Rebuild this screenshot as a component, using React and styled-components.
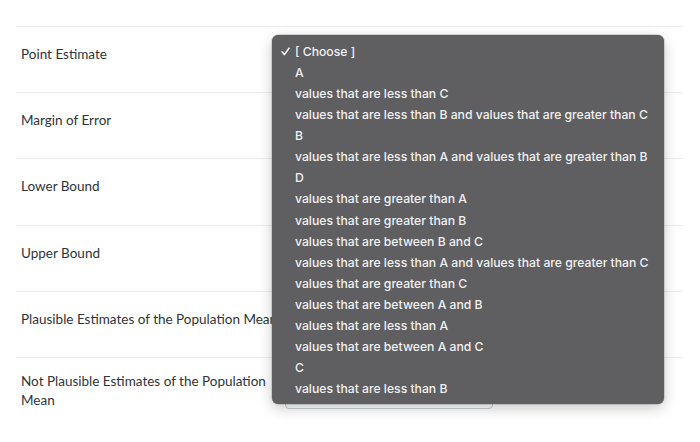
import React from "react";
import styled, { createGlobalStyle } from "styled-components";

const Global = createGlobalStyle`
  html, body { margin: 0; padding: 0; background: #ffffff; }
  body { width: 700px; height: 442px; overflow: hidden; }
`;

const Page = styled.div`
  position: relative;
  width: 700px;
  height: 442px;
  padding: 26px 17px 0 16px;
  box-sizing: border-box;
  font-family: Lato, "Open Sans", sans-serif;
`;

const Table = styled.div`
  display: flex;
  flex-direction: column;
`;

const Row = styled.div`
  display: grid;
  grid-template-columns: 269px 1fr;
  align-items: center;
  height: 66.2px;
  box-sizing: border-box;
  border-top: 1.5px solid #ececec;
  padding-bottom: ${(p) => p.$pb}px;
`;

const Label = styled.div`
  padding-left: 5px;
  font-size: 13.5px;
  line-height: 19px;
  color: #2f3439;
  white-space: ${(p) => (p.$wrap ? "normal" : "nowrap")};
`;

const SelectBox = styled.div`
  width: 208px;
  height: 36px;
  box-sizing: border-box;
  border: 1px solid #c7cdd1;
  border-radius: 4px;
  background: #fff;
`;

const Menu = styled.div`
  position: absolute;
  left: 272px;
  top: 35px;
  width: 392px;
  height: 369px;
  box-sizing: border-box;
  padding: 6px 0 0 0;
  background: #5f5f62;
  border-radius: 6px;
  box-shadow: 0 4px 14px rgba(0, 0, 0, 0.22), 0 0 0 0.5px rgba(0, 0, 0, 0.25);
  font-family: Inter, "Open Sans", sans-serif;
  display: flex;
  flex-direction: column;
`;

const Item = styled.div`
  display: flex;
  align-items: center;
  height: 21.07px;
  padding-left: 9px;
  font-size: 12.2px;
  font-weight: 500;
  color: #f1f1f1;
  white-space: nowrap;
`;

const Check = styled.span`
  width: 14px;
  display: inline-flex;
  align-items: center;
  justify-content: flex-start;
`;

const CheckIcon = () => (
  <svg width="9" height="9" viewBox="0 0 9 9">
    <path d="M1 4.8 L3.4 7.6 L8 1.2" fill="none" stroke="#f1f1f1" strokeWidth="1.6" strokeLinecap="round" strokeLinejoin="round" />
  </svg>
);

const rows = [
  "Point Estimate",
  "Margin of Error",
  "Lower Bound",
  "Upper Bound",
  "Plausible Estimates of the Population Mean",
  "Not Plausible Estimates of the Population Mean",
];

const options = [
  "[ Choose ]",
  "A",
  "values that are less than C",
  "values that are less than B and values that are greater than C",
  "B",
  "values that are less than A and values that are greater than B",
  "D",
  "values that are greater than A",
  "values that are greater than B",
  "values that are between B and C",
  "values that are less than A and values that are greater than C",
  "values that are greater than C",
  "values that are between A and B",
  "values that are less than A",
  "values that are between A and C",
  "C",
  "values that are less than B",
];

export default function App() {
  return (
    <>
      <Global />
      <Page>
        <Table>
          {rows.map((r, i) => (
            <Row key={r} $pb={i === 5 ? 0 : 10}>
              <Label $wrap={i === 5}>{r}</Label>
              <SelectBox />
            </Row>
          ))}
        </Table>
        <Menu>
          {options.map((o, i) => (
            <Item key={i}>
              <Check>{i === 0 ? <CheckIcon /> : null}</Check>
              {o}
            </Item>
          ))}
        </Menu>
      </Page>
    </>
  );
}
